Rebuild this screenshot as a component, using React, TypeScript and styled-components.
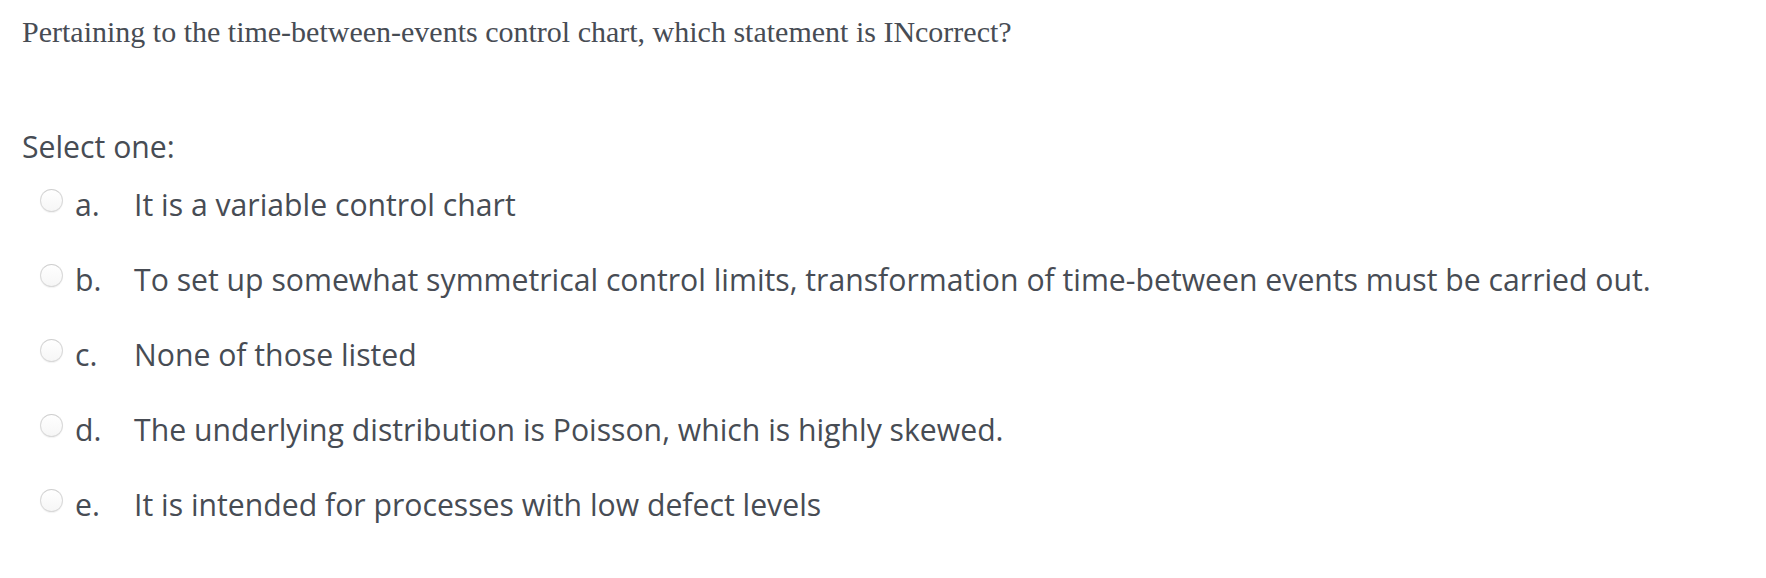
import React from "react";
import styled, { createGlobalStyle } from "styled-components";

const Global = createGlobalStyle`
  html, body { margin: 0; padding: 0; background: #fff; }
  body { color: #474c54; }
`;

const Page = styled.div`
  padding: 14px 0 0 22px;
`;

const Question = styled.div`
  font-family: "Liberation Serif", "Times New Roman", serif;
  font-size: 30px;
  line-height: 36px;
`;

const Answer = styled.fieldset`
  border: 0;
  margin: 79px 0 0;
  padding: 0;
  font-family: "Open Sans", sans-serif;
  font-size: 30.2px;
  line-height: 36px;
`;

const Prompt = styled.legend`
  padding: 0;
  margin: 0;
`;

const Options = styled.div`
  display: flex;
  flex-direction: column;
  gap: 39px;
  margin-top: 22px;
  padding-left: 18px;
`;

const Option = styled.label`
  display: flex;
  align-items: flex-start;
`;

const Radio = styled.input.attrs({ type: "radio" })`
  appearance: none;
  -webkit-appearance: none;
  flex: none;
  width: 23px;
  height: 23px;
  margin: 2px 12px 0 0;
  border-radius: 50%;
  border: 1px solid #d9d9d9;
  border-top-color: #cfcfcf;
  background: linear-gradient(#ffffff, #f6f6f6);
  box-shadow: 0 1px 1px rgba(0, 0, 0, 0.05);
  box-sizing: border-box;
`;

const Letter = styled.span`
  flex: none;
  width: 59px;
`;

const Text = styled.span``;

const options = [
  ["a.", "It is a variable control chart"],
  ["b.", "To set up somewhat symmetrical control limits, transformation of time-between events must be carried out."],
  ["c.", "None of those listed"],
  ["d.", "The underlying distribution is Poisson, which is highly skewed."],
  ["e.", "It is intended for processes with low defect levels"],
];

export default function App() {
  return (
    <>
      <Global />
      <Page>
        <Question>Pertaining to the time-between-events control chart, which statement is INcorrect?</Question>
        <Answer>
          <Prompt>Select one:</Prompt>
          <Options>
            {options.map(([l, t]) => (
              <Option key={l}>
                <Radio name="answer" />
                <Letter>{l}</Letter>
                <Text>{t}</Text>
              </Option>
            ))}
          </Options>
        </Answer>
      </Page>
    </>
  );
}
